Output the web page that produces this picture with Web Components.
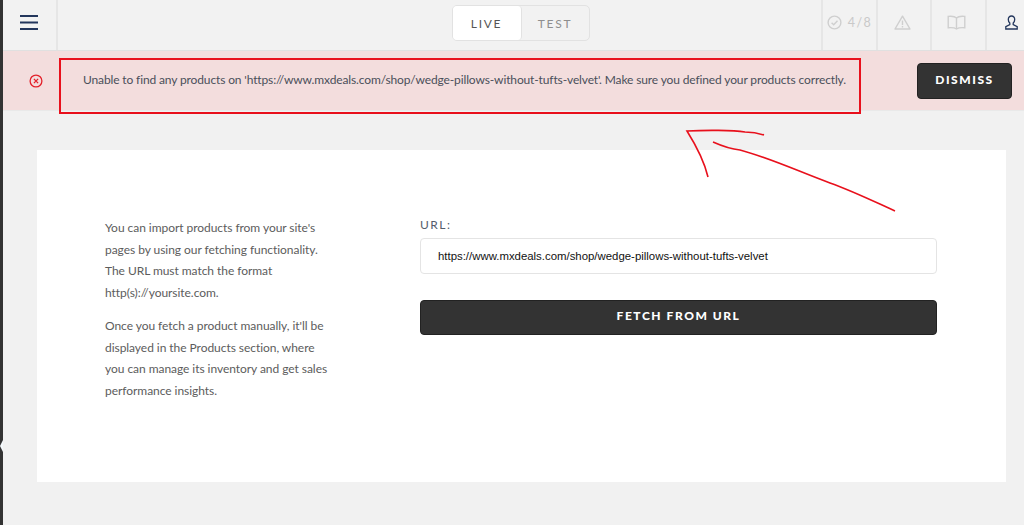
<!DOCTYPE html>
<html>
<head>
<meta charset="utf-8">
<style>
  html, body { margin: 0; height: 525px; overflow: hidden; }
  body { background: #f1f1f1; font-family: "Lato", "Liberation Sans", sans-serif; }
</style>
</head>
<body>
<app-shell>
  <top-bar></top-bar>
  <alert-banner action="DISMISS">Unable to find any products on 'https://www.mxdeals.com/shop/wedge-pillows-without-tufts-velvet'. Make sure you defined your products correctly.</alert-banner>
  <fetch-card>
    <p>You can import products from your site's<br>pages by using our fetching functionality.<br>The URL must match the format<br>http(s)://yoursite.com.</p>
    <p>Once you fetch a product manually, it'll be<br>displayed in the Products section, where<br>you can manage its inventory and get sales<br>performance insights.</p>
  </fetch-card>
</app-shell>
<ink-notes></ink-notes>

<script>
class AppShell extends HTMLElement {
  constructor() {
    super();
    this.attachShadow({ mode: 'open' });
    this.shadowRoot.innerHTML = `
      <style>
        :host { display: block; position: relative; height: 525px; border-left: 3px solid #333; box-sizing: border-box; }
        /* little notch of the collapsed side menu */
        .notch { position: absolute; left: -3px; top: 440px; width: 3px; height: 12px; background: #f4f8fb; clip-path: polygon(100% 0, 100% 100%, 0 50%); }
      </style>
      <div class="notch"></div>
      <slot></slot>`;
  }
}

class TopBar extends HTMLElement {
  constructor() {
    super();
    this.attachShadow({ mode: 'open' });
    this.shadowRoot.innerHTML = `
      <style>
        :host { display: flex; height: 51px; box-sizing: border-box; border-bottom: 1px solid #e0e0e0; background: #f2f2f2; color: #555; }
        .burger { flex: none; width: 55px; padding: 0 1px 5px 0; box-sizing: border-box; border-right: 2px solid #e6e6e6; display: flex; align-items: center; justify-content: center; }
        .middle { flex: 1; display: flex; justify-content: center; align-items: center; padding-left: 162px; padding-bottom: 4px; }
        .toggle { display: flex; width: 138px; height: 36px; box-sizing: border-box; border: 1px solid #e2e2e2; border-radius: 5px; }
        .toggle span { display: flex; align-items: center; justify-content: center; font-size: 12px; letter-spacing: 1.7px; }
        .live { width: 68px; background: #fff; color: #555; border-radius: 4px; border-right: 1px solid #e2e2e2; }
        .test { flex: 1; color: #8e8e8e; }
        .cell { box-sizing: border-box; flex: none; padding-bottom: 5px; border-left: 2px solid #e6e6e6; display: flex; align-items: center; justify-content: center; gap: 6px; color: #c9c9c9; font-size: 12.5px; letter-spacing: 1.5px; }
        svg { display: block; fill: none; }
      </style>
      <div class="burger">
        <svg width="18" height="15" viewBox="0 0 18 15" stroke="#23365c" stroke-width="1.8"><path d="M0 1h18M0 7.500h18M0 14h18"/></svg>
      </div>
      <div class="middle">
        <div class="toggle"><span class="live">LIVE</span><span class="test">TEST</span></div>
      </div>
      <div class="cell" style="width:55px">
        <svg width="15" height="15" viewBox="0 0 15 15" stroke="#cfcfcf" stroke-width="1.4"><circle cx="7.500" cy="7.500" r="6.400"/><path d="M4.600 7.700l2.100 2.100 3.800-4"/></svg>
        <span>4/8</span>
      </div>
      <div class="cell" style="width:54px;padding-right:4px">
        <svg width="17" height="15" viewBox="0 0 17 15" stroke="#cfcfcf" stroke-width="1.4"><path d="M8.500 1.200L16 14H1z" stroke-linejoin="round"/><path d="M8.500 5.500v4.400M8.500 11v1.400"/></svg>
      </div>
      <div class="cell" style="width:55px;padding-right:4px">
        <svg width="19" height="15" viewBox="0 0 19 15" stroke="#cfcfcf" stroke-width="1.4"><path d="M9.500 3C8 1.400 5 1 1.200 1.400v11.400C5 12.400 8 13 9.500 14c1.500-1 4.500-1.600 8.300-1.200V1.400C14 1 11 1.400 9.500 3zM9.500 3v11"/></svg>
      </div>
      <div class="cell" style="width:39px;justify-content:flex-start;padding-left:18px">
        <svg width="13" height="15" viewBox="0 0 13 15" stroke="#23365c" stroke-width="1.3"><path d="M6.500 1c-2 0-3.200 1.400-3.200 3.400 0 1.500.6 2.800 1.500 3.600v1.600L.8 11.600V14h11.400v-2.400L8.200 9.600V8c.9-.8 1.500-2.100 1.500-3.600C9.700 2.400 8.500 1 6.500 1z"/></svg>
      </div>`;
  }
}

class AlertBanner extends HTMLElement {
  constructor() {
    super();
    this.attachShadow({ mode: 'open' });
    this.shadowRoot.innerHTML = `
      <style>
        :host { display: flex; align-items: center; height: 60px; box-sizing: border-box; background: #f3dddd; border-bottom: 1px solid #e9e9e9; color: #4a4f5a; }
        .icon { width: 80px; padding-left: 26px; box-sizing: border-box; flex: none; }
        .msg { flex: 1; font-size: 12px; letter-spacing: -.13px; white-space: nowrap; padding-bottom: 3px; }
        button { flex: none; width: 95px; height: 36px; margin-right: 12px; padding: 0 0 2px; border: 1px solid #222; border-radius: 4px; background: #333; color: #fff; font: 900 12px "Lato", sans-serif; letter-spacing: 1.55px; }
        svg { display: block; }
      </style>
      <div class="icon">
        <svg width="14" height="14" viewBox="0 0 14 14" fill="none" stroke="#e3202a" stroke-width="1.3"><circle cx="7" cy="7" r="5.900"/><path d="M4.900 4.900l4.200 4.200M9.100 4.900l-4.200 4.200"/></svg>
      </div>
      <div class="msg"><slot></slot></div>
      <button>${this.getAttribute('action')}</button>`;
  }
}

class FetchCard extends HTMLElement {
  constructor() {
    super();
    this.attachShadow({ mode: 'open' });
    this.shadowRoot.innerHTML = `
      <style>
        :host { display: flex; width: 969px; height: 332px; margin: 39px 0 0 34px; box-sizing: border-box; padding: 68px 69px 0 68px; background: #fff; }
        .help { width: 315px; flex: none; margin-top: -1px; font-size: 12px; line-height: 21.5px; color: #5c5c5c; letter-spacing: -.05px; }
        ::slotted(p) { margin: 0 0 12px; white-space: nowrap; }
        .form { flex: 1; }
        label { display: block; font-size: 12px; letter-spacing: 1.5px; color: #555d6b; line-height: 14px; margin-bottom: 6px; }
        .url { height: 36px; box-sizing: border-box; border: 1px solid #e4e4e4; border-radius: 4px; padding: 0 17px; display: flex; align-items: center; font: 11.4px "Liberation Sans", Arial, sans-serif; color: #111; }
        button { display: block; width: 100%; height: 35px; margin-top: 26px; padding: 0 0 5px; border: 1px solid #222; border-radius: 4px; background: #333; color: #fff; font: 900 12px "Lato", sans-serif; letter-spacing: 1.55px; }
      </style>
      <div class="help"><slot></slot></div>
      <div class="form">
        <label>URL:</label>
        <div class="url">https://www.mxdeals.com/shop/wedge-pillows-without-tufts-velvet</div>
        <button>FETCH FROM URL</button>
      </div>`;
  }
}

// hand drawn red marks laid over the screenshot
class InkNotes extends HTMLElement {
  constructor() {
    super();
    this.attachShadow({ mode: 'open' });
    this.shadowRoot.innerHTML = `
      <style>
        :host { position: absolute; left: 0; top: 0; width: 1024px; height: 525px; pointer-events: none; }
        svg { display: block; fill: none; stroke: #e8101c; }
      </style>
      <svg width="1024" height="525" viewBox="0 0 1024 525">
        <rect x="60" y="59" width="800" height="54" stroke-width="2" shape-rendering="crispEdges"/>
        <path stroke-width="1.6" d="M708 177C704 160 697 147 687 131C705 130 733 130 745 132C753 132 758 133 764 135"/>
        <path stroke-width="1.6" d="M713 142C722 146 730 149 740 150C770 158 800 172 830 183C855 192 875 202 895 211"/>
      </svg>`;
  }
}

customElements.define('app-shell', AppShell);
customElements.define('top-bar', TopBar);
customElements.define('alert-banner', AlertBanner);
customElements.define('fetch-card', FetchCard);
customElements.define('ink-notes', InkNotes);
</script>
</body>
</html>
